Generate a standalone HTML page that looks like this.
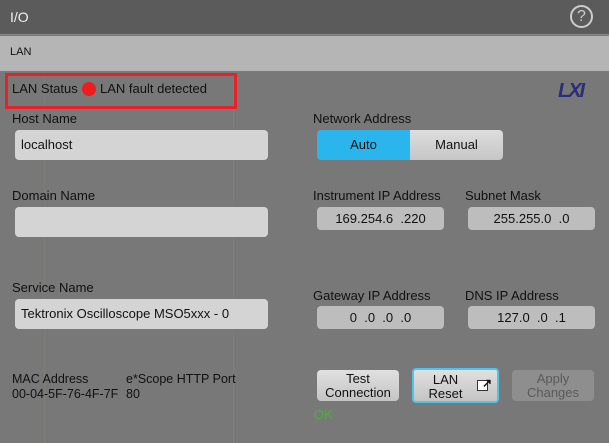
<!DOCTYPE html><html><head><style>
body{margin:0;width:609px;height:443px;overflow:hidden;background:#787878;font-family:"Liberation Sans",sans-serif;position:relative;color:#111}
div{position:absolute;box-sizing:border-box}
.t{font-size:13px;white-space:nowrap}
.f{background:#d4d4d4;border-radius:4px;font-size:13px;padding-left:6px;line-height:30px}
.ip{background:#bdbdbd;border-radius:4px;font-size:13px;text-align:center;line-height:23px}
.b{background:linear-gradient(#e0e0e0,#c4c4c4);border-radius:4px;font-size:13px;text-align:center;line-height:14px;padding-top:2px}
</style></head><body>
<div style="left:0;top:0;width:609px;height:35px;background:#5b5b5c;border-bottom:1px solid #888"></div>
<div class="t" style="left:10px;top:9px;color:#eee;font-size:14px">I/O</div>
<div style="left:570px;top:5px;width:23px;height:23px;border:2px solid #ccc;border-radius:50%;color:#ccc;font-size:16px;text-align:center;line-height:20px">?</div>
<div style="left:0;top:36px;width:609px;height:35px;background:#b5b5b5"></div>
<div class="t" style="left:10px;top:46px;font-size:11px">LAN</div>
<div style="left:44px;top:71px;width:1px;height:372px;background:#7e7d78"></div>
<div style="left:233px;top:71px;width:1px;height:372px;background:#7e7d78"></div>
<div style="left:5px;top:73px;width:232px;height:36px;border:3px solid #e8202a"></div>
<div class="t" style="left:12px;top:81px">LAN Status</div>
<div style="left:82px;top:82px;width:14px;height:14px;border-radius:50%;background:#f01c1c"></div>
<div class="t" style="left:100px;top:81px">LAN fault detected</div>
<div style="left:558px;top:80px;font-size:20px;font-weight:bold;font-style:italic;color:#2a2f7a;letter-spacing:-2px">LXI</div>
<div class="t" style="left:12px;top:111px">Host Name</div>
<div class="f" style="left:15px;top:130px;width:253px;height:30px">localhost</div>
<div class="t" style="left:12px;top:188px">Domain Name</div>
<div class="f" style="left:15px;top:207px;width:253px;height:30px"></div>
<div class="t" style="left:12px;top:280px">Service Name</div>
<div class="f" style="left:15px;top:299px;width:253px;height:30px">Tektronix Oscilloscope MSO5xxx - 0</div>
<div class="t" style="left:12px;top:372px;font-size:12.5px;line-height:15px">MAC Address<br>00-04-5F-76-4F-7F</div>
<div class="t" style="left:126px;top:372px;font-size:12.5px;line-height:15px">e*Scope HTTP Port<br>80</div>
<div class="t" style="left:313px;top:111px">Network Address</div>
<div style="left:317px;top:130px;width:93px;height:30px;background:#2ab6ec;border-radius:4px 0 0 4px;text-align:center;line-height:30px;font-size:13px">Auto</div>
<div style="left:410px;top:130px;width:93px;height:30px;background:linear-gradient(#ddd,#c6c6c6);border-radius:0 4px 4px 0;text-align:center;line-height:30px;font-size:13px">Manual</div>
<div class="t" style="left:313px;top:188px">Instrument IP Address</div>
<div class="t" style="left:465px;top:188px">Subnet Mask</div>
<div class="ip" style="left:317px;top:207px;width:127px;height:23px">169.254.6&nbsp; .220</div>
<div class="ip" style="left:468px;top:207px;width:127px;height:23px">255.255.0&nbsp; .0</div>
<div class="t" style="left:313px;top:288px">Gateway IP Address</div>
<div class="t" style="left:465px;top:288px">DNS IP Address</div>
<div class="ip" style="left:317px;top:306px;width:127px;height:23px">0 &nbsp;.0 &nbsp;.0 &nbsp;.0</div>
<div class="ip" style="left:468px;top:306px;width:127px;height:23px">127.0 &nbsp;.0 &nbsp;.1</div>
<div class="b" style="left:317px;top:370px;width:82px;height:31px">Test<br>Connection</div>
<div class="b" style="left:412px;top:368px;width:87px;height:35px;border:2px solid #4fc3e8;padding-top:3px;padding-right:20px">LAN<br>Reset</div>
<div style="left:477px;top:380px;width:11px;height:11px;border:1.5px solid #333;background:#fff"></div>
<div style="left:482px;top:376px;font-size:12px;font-weight:bold">&#8599;</div>
<div class="b" style="left:512px;top:370px;width:82px;height:31px;background:#8e8e8e;color:#5a5a5a">Apply<br>Changes</div>
<div class="t" style="left:314px;top:407px;color:#4caf3a">OK</div>
</body></html>
